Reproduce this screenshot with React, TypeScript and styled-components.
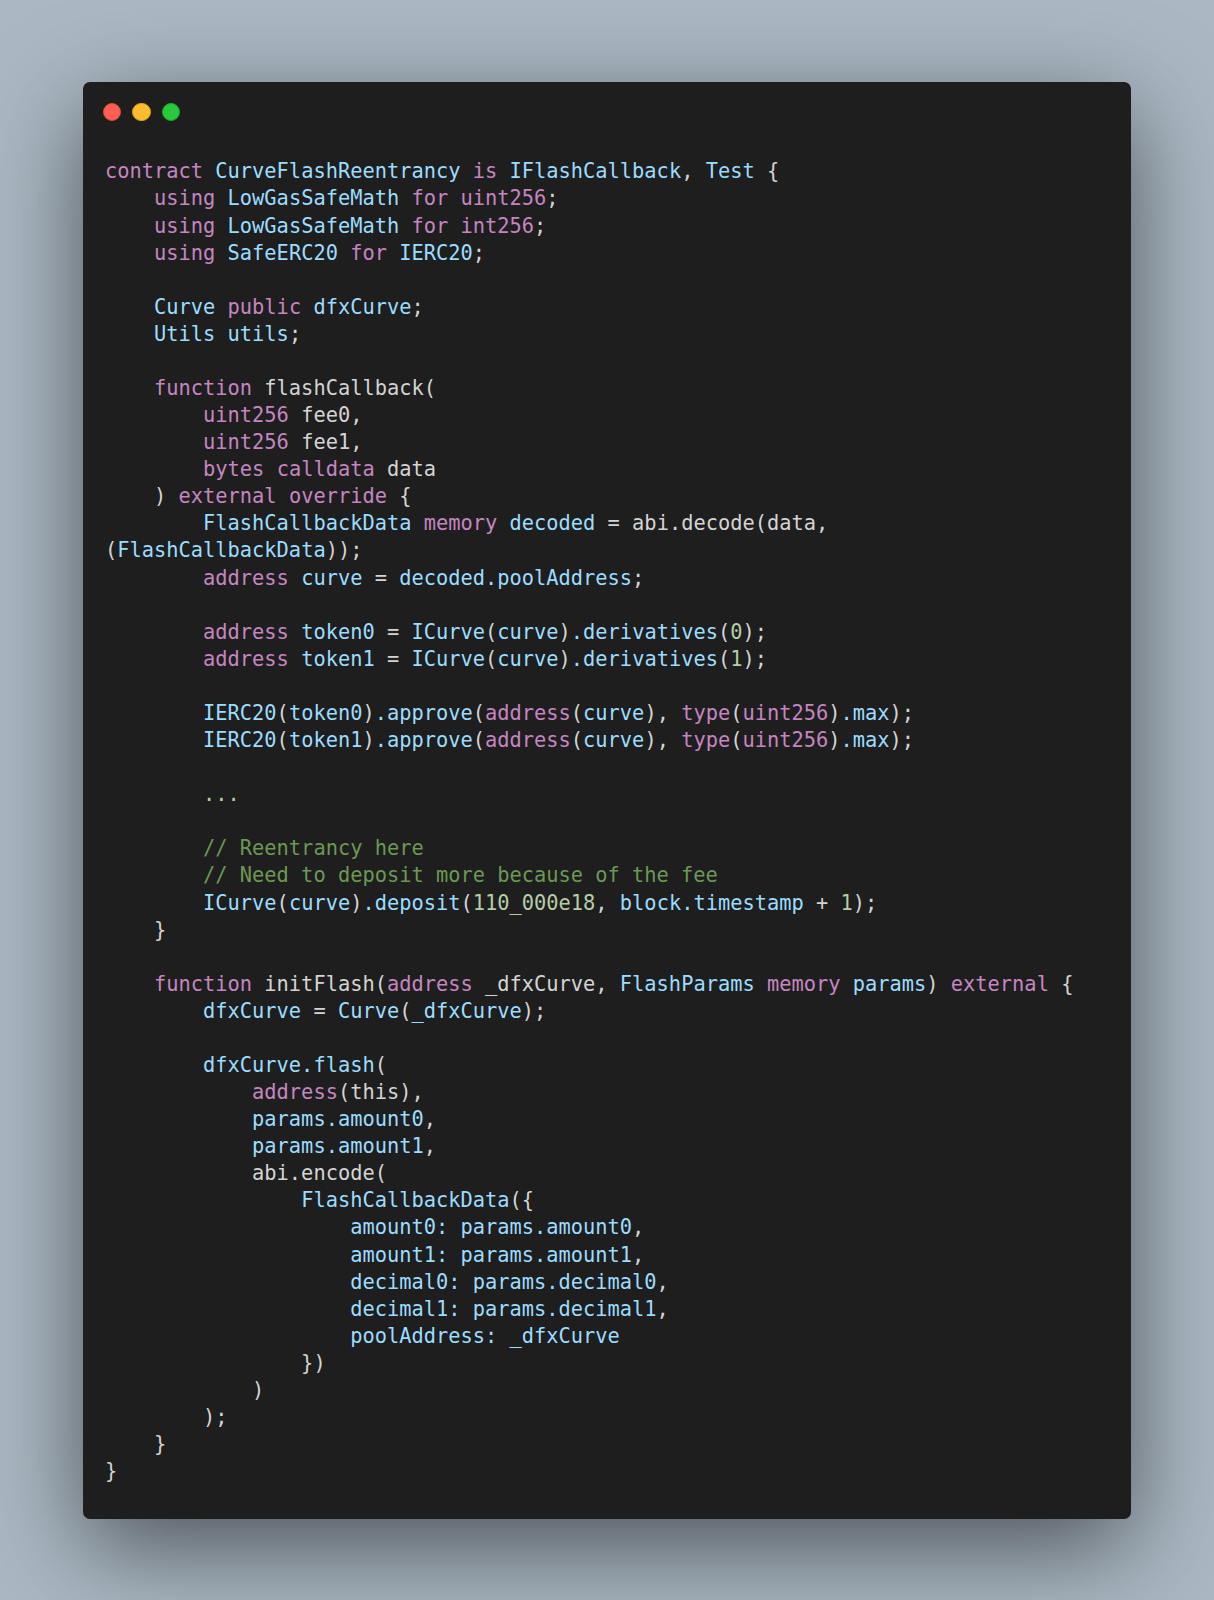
import React from "react";
import styled, { createGlobalStyle } from "styled-components";

const GlobalStyle = createGlobalStyle`
  html, body {
    margin: 0;
    padding: 0;
    background: #abb8c3;
  }
`;

const Page = styled.div`
  box-sizing: border-box;
  width: 1214px;
  min-height: 1600px;
  padding: 82px 83px;
  background: #abb8c3;
`;

const Window = styled.div`
  background: #1e1e1e;
  border-radius: 7px;
  box-shadow: 0 29px 99px rgba(0, 0, 0, 0.55);
  padding: 21px 0 34px;
`;

const Controls = styled.div`
  display: flex;
  gap: 11px;
  padding-left: 20px;
`;

const Dot = styled.span<{ $fill: string; $stroke: string }>`
  display: block;
  box-sizing: border-box;
  width: 18.4px;
  height: 18.4px;
  border-radius: 50%;
  background: ${(p) => p.$fill};
  border: 0.8px solid ${(p) => p.$stroke};
`;

const Code = styled.div`
  margin-top: 37px;
  padding: 0 22px;
  font-family: "DejaVu Sans Mono", "Liberation Mono", monospace;
  font-size: 20.36px;
  line-height: 27.08px;
  color: #d4d4d4;
`;

const Line = styled.div`
  white-space: pre;
  min-height: 27.08px;
`;

const colors: Record<string, string> = {
  k: "#c586c0",
  b: "#9cdcfe",
  n: "#b5cea8",
  c: "#6a9955",
};

const Tok = styled.span<{ $kind: string }>`
  color: ${(p) => colors[p.$kind] ?? "#d4d4d4"};
`;

const source = [
  "[k:contract] [b:CurveFlashReentrancy] [k:is] [b:IFlashCallback], [b:Test] {",
  "    [k:using] [b:LowGasSafeMath] [k:for] [k:uint256];",
  "    [k:using] [b:LowGasSafeMath] [k:for] [k:int256];",
  "    [k:using] [b:SafeERC20] [k:for] [b:IERC20];",
  "",
  "    [b:Curve] [k:public] [b:dfxCurve];",
  "    [b:Utils] [b:utils];",
  "",
  "    [k:function] flashCallback(",
  "        [k:uint256] fee0,",
  "        [k:uint256] fee1,",
  "        [k:bytes] [k:calldata] data",
  "    ) [k:external] [k:override] {",
  "        [b:FlashCallbackData] [k:memory] [b:decoded] = abi.decode(data,",
  "([b:FlashCallbackData]));",
  "        [k:address] [b:curve] = [b:decoded.poolAddress];",
  "",
  "        [k:address] [b:token0] = [b:ICurve]([b:curve])[b:.derivatives]([n:0]);",
  "        [k:address] [b:token1] = [b:ICurve]([b:curve])[b:.derivatives]([n:1]);",
  "",
  "        [b:IERC20]([b:token0])[b:.approve]([k:address]([b:curve]), [k:type]([k:uint256])[b:.max]);",
  "        [b:IERC20]([b:token1])[b:.approve]([k:address]([b:curve]), [k:type]([k:uint256])[b:.max]);",
  "",
  "        [n:...]",
  "",
  "        [c:// Reentrancy here]",
  "        [c:// Need to deposit more because of the fee]",
  "        [b:ICurve]([b:curve])[b:.deposit]([n:110_000e18], [b:block.timestamp] + [n:1]);",
  "    }",
  "",
  "    [k:function] initFlash([k:address] _dfxCurve, [b:FlashParams] [k:memory] [b:params]) [k:external] {",
  "        [b:dfxCurve] = [b:Curve]([b:_dfxCurve]);",
  "",
  "        [b:dfxCurve.flash](",
  "            [k:address](this),",
  "            [b:params.amount0],",
  "            [b:params.amount1],",
  "            abi.encode(",
  "                [b:FlashCallbackData]({",
  "                    [b:amount0: params.amount0],",
  "                    [b:amount1: params.amount1],",
  "                    [b:decimal0: params.decimal0],",
  "                    [b:decimal1: params.decimal1],",
  "                    [b:poolAddress: _dfxCurve]",
  "                })",
  "            )",
  "        );",
  "    }",
  "}",
];

type Token = { kind: string; text: string };

function tokenize(line: string): Token[] {
  const out: Token[] = [];
  const re = /\[(\w):([^\]]*)\]/g;
  let last = 0;
  let m: RegExpExecArray | null;
  while ((m = re.exec(line)) !== null) {
    if (m.index > last) out.push({ kind: "t", text: line.slice(last, m.index) });
    out.push({ kind: m[1], text: m[2] });
    last = m.index + m[0].length;
  }
  if (last < line.length) out.push({ kind: "t", text: line.slice(last) });
  return out;
}

export default function App() {
  return (
    <>
      <GlobalStyle />
      <Page>
        <Window>
          <Controls>
            <Dot $fill="#ff5f56" $stroke="#e0443e" />
            <Dot $fill="#ffbd2e" $stroke="#dea123" />
            <Dot $fill="#27c93f" $stroke="#1aab29" />
          </Controls>
          <Code>
            {source.map((line, i) => (
              <Line key={i}>
                {tokenize(line).map((t, j) => (
                  <Tok key={j} $kind={t.kind}>
                    {t.text}
                  </Tok>
                ))}
              </Line>
            ))}
          </Code>
        </Window>
      </Page>
    </>
  );
}
